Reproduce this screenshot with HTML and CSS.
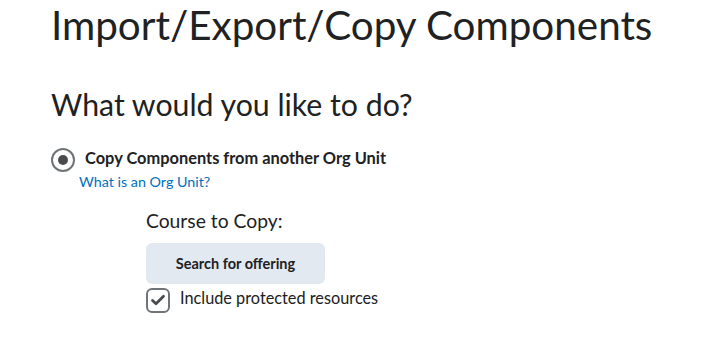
FILE: index.html
```html
<!DOCTYPE html>
<html>
<head>
<meta charset="utf-8">
<link rel="stylesheet" href="styles.css">
</head>
<body>
<main class="page">
  <h1 class="title">Import/Export/Copy Components</h1>
  <h2 class="subtitle">What would you like to do?</h2>
  <div class="option">
    <label class="radio-row">
      <span class="radio"><span class="radio-dot"></span></span>
      <span class="radio-label">Copy Components from another Org Unit</span>
    </label>
    <a class="help-link" href="#">What is an Org Unit?</a>
  </div>
  <div class="course">
    <div class="course-label">Course to Copy:</div>
    <button class="btn" type="button">Search for offering</button>
    <label class="check-row">
      <span class="checkbox">
        <svg width="16" height="14" viewBox="0 0 16 14"><path d="M2.5 7.5 L6 10.8 L13.5 3.2" fill="none" stroke="#494c4e" stroke-width="2.8" stroke-linecap="round" stroke-linejoin="round"/></svg>
      </span>
      <span class="check-label">Include protected resources</span>
    </label>
  </div>
</main>
</body>
</html>
```
FILE: styles.css
```css
* { box-sizing: border-box; }
html, body { margin: 0; padding: 0; background: #fff; }
body { font-family: Lato, "Noto Sans", sans-serif; color: #202122; }
.page { padding: 1px 0 0 51px; }
.title {
  margin: 0;
  font-size: 40.4px;
  font-weight: 400;
  line-height: 48px;
}
.subtitle {
  margin: 36.5px 0 0 0;
  font-size: 30.25px;
  font-weight: 400;
  line-height: 36px;
}
.option { margin-top: 26px; }
.radio-row { display: flex; align-items: flex-start; gap: 10px; }
.radio {
  width: 24px; height: 24px;
  margin-top: 0.5px;
  border: 2px solid #6e7477;
  border-radius: 50%;
  display: flex; align-items: center; justify-content: center;
  flex: none;
}
.radio-dot { width: 10px; height: 10px; border-radius: 50%; background: #494c4e; }
.radio-label { font-size: 16.4px; line-height: 20px; font-weight: 700; color: #202122; }
.help-link {
  display: block;
  margin: 0 0 0 28px;
  font-size: 14.3px;
  line-height: 20px;
  color: #006fbf;
  text-decoration: none;
}
.course { margin: 17px 0 0 95px; }
.course-label { font-size: 19.3px; line-height: 24px; color: #202122; }
.btn {
  display: block;
  margin-top: 10.4px;
  width: 179px; height: 41px;
  padding: 0;
  border: none;
  border-radius: 6px;
  background: #e3e9f1;
  font-family: Lato, "Noto Sans", sans-serif;
  font-size: 14.5px;
  font-weight: 700;
  color: #202122;
}
.check-row { display: flex; align-items: flex-start; gap: 10px; margin-top: 3.5px; }
.checkbox {
  width: 24px; height: 25px;
  border: 2px solid #6e7477;
  border-radius: 6px;
  display: flex; align-items: center; justify-content: center;
  flex: none;
}
.check-label { font-size: 16.3px; line-height: 20px; color: #202122; }
```
